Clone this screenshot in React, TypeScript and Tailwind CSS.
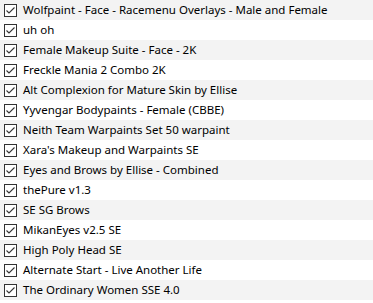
const mods = [
  'Wolfpaint - Face - Racemenu Overlays - Male and Female',
  'uh oh',
  'Female Makeup Suite - Face - 2K',
  'Freckle Mania 2 Combo 2K',
  'Alt Complexion for Mature Skin by Ellise',
  'Yyvengar Bodypaints - Female (CBBE)',
  'Neith Team Warpaints Set 50 warpaint',
  "Xara's Makeup and Warpaints SE",
  'Eyes and Brows by Ellise - Combined',
  'thePure v1.3',
  'SE SG Brows',
  'MikanEyes v2.5 SE',
  'High Poly Head SE',
  'Alternate Start - Live Another Life',
  'The Ordinary Women SSE 4.0',
];

function CheckBox() {
  return (
    <svg width="13" height="13" viewBox="0 0 13 13" className="shrink-0">
      <rect x="0.5" y="0.5" width="12" height="12" fill="white" stroke="#333333" />
      <path d="M2.5 6.5 L5 9 L10.5 3.5" fill="none" stroke="#333333" strokeWidth="1.1" />
    </svg>
  );
}

export default function App() {
  return (
    <div className="w-[373px] h-[303px] bg-white overflow-hidden" style={{ fontFamily: '"Segoe UI", "Noto Sans", sans-serif' }}>
      {mods.map((name, i) => (
        <div
          key={name}
          className={`h-5 flex items-center pl-1 gap-[6px] text-[11.5px] text-black ${i % 2 === 0 ? 'bg-[#f3f3f3]' : 'bg-white'}`}
        >
          <CheckBox />
          <span className="whitespace-nowrap leading-none">{name}</span>
        </div>
      ))}
    </div>
  );
}
